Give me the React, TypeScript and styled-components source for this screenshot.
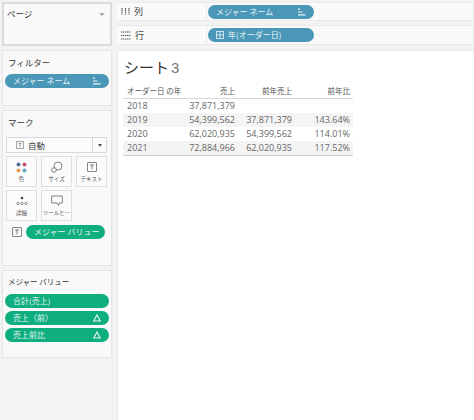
import React from "react";
import styled, { createGlobalStyle } from "styled-components";

const Global = createGlobalStyle`
  html, body { margin: 0; padding: 0; background: #f3f3f3; }
  body { font-family: "Noto Sans CJK JP", "Liberation Sans", sans-serif; }
  #root { width: 474px; height: 420px; overflow: hidden; }
`;

const Page = styled.div`
  width: 474px; height: 420px; display: grid;
  grid-template-columns: 112px 1fr; column-gap: 5px;
  padding-top: 2px; box-sizing: border-box; background: #f3f3f3; overflow: hidden;
`;
const Side = styled.aside`
  display: flex; flex-direction: column; gap: 4px; padding-left: 2px;
`;
const Card = styled.section<{ $h: number; $strong?: boolean }>`
  height: ${p => p.$h}px; box-sizing: border-box; background: #f9f9f9;
  border: ${p => (p.$strong ? "2px solid #dcdcdc" : "1px solid #e4e4e4")};
  position: relative;
`;
const CardTitle = styled.div<{ $small?: boolean; $tight?: boolean }>`
  font-size: ${p => (p.$small ? 7.5 : 8.5)}px; line-height: 12px; color: #333;
  padding: ${p => (p.$tight ? "3px 0 0 3px" : "5px 0 0 5px")};
`;
const Caret = styled.span`
  position: absolute; right: 5px; top: 9px; width: 0; height: 0;
  border-left: 3px solid transparent; border-right: 3px solid transparent;
  border-top: 3px solid #aaa;
`;
const Pill = styled.div<{ $green?: boolean; $w?: number }>`
  height: 14px; border-radius: 7px; box-sizing: border-box;
  width: ${p => (p.$w ? `${p.$w}px` : "auto")};
  background: ${p => (p.$green ? "#0fae7e" : "#4a97b7")};
  color: #e9f5f7; font-size: 8px; line-height: 14px; white-space: nowrap;
  display: flex; align-items: center; justify-content: space-between;
  padding: 0 8px;
`;
const PillStack = styled.div`
  display: flex; flex-direction: column; gap: 3px; padding: 6px 2px 0 2px;
`;
const FilterPill = styled.div`
  padding: 6px 2px 0 2px;
`;
const DropDown = styled.div`
  margin: 9px 4px 0 3px; height: 14px; border: 1px solid #d8d8d8; background: #fbfbfb;
  display: flex; align-items: center; font-size: 8.5px; color: #444; position: relative;
`;
const DropLabel = styled.div`
  flex: 1; display: flex; align-items: center; gap: 4px; padding-left: 9px;
`;
const DropArrow = styled.div`
  width: 13px; height: 100%; border-left: 1px solid #d8d8d8;
  display: flex; align-items: center; justify-content: center;
  &::after { content: ""; border-left: 2.5px solid transparent; border-right: 2.5px solid transparent; border-top: 3px solid #555; }
`;
const MarkGrid = styled.div`
  display: grid; grid-template-columns: repeat(3, 31px); grid-auto-rows: 31px;
  column-gap: 4px; row-gap: 3px; margin: 3px 0 0 3px;
`;
const MarkTile = styled.div`
  border: 1px solid #dfdfdf; background: #fbfbfb; display: flex; flex-direction: column;
  align-items: center; justify-content: flex-end; padding-bottom: 2px; box-sizing: border-box;
  font-size: 5.5px; line-height: 9px; color: #555; white-space: nowrap; overflow: hidden;
`;
const TileIcon = styled.div`
  flex: 1; display: flex; align-items: center; justify-content: center; padding-top: 2px;
`;
const EncodingRow = styled.div`
  display: flex; align-items: center; gap: 4px; margin: 4px 0 0 9px;
`;
const Main = styled.main`
  display: flex; flex-direction: column; gap: 4px; min-width: 0;
`;
const Shelf = styled.div<{ $h: number }>`
  height: ${p => p.$h}px; background: #fafafa; box-sizing: border-box; margin-right: 2px;
  border-top: 1px solid #e9e9e9; border-bottom: 1px solid #e9e9e9;
  display: grid; grid-template-columns: 90px 1fr;
`;
const ShelfLabel = styled.div`
  border-right: 1px solid #eaeaea; display: flex; align-items: center; gap: 4px;
  padding-left: 4px; font-size: 9px; color: #444;
`;
const ShelfBody = styled.div`
  display: flex; align-items: center; padding-left: 1px;
`;
const Sheet = styled.div`
  flex: 1; background: #fff; padding: 5px 0 0 6px; border-top: 1px solid #e6e6e6;
  border-left: 1px solid #e6e6e6; margin-top: 1px;
`;
const SheetTitle = styled.h1`
  margin: 0; font-size: 15px; line-height: 22px; font-weight: 400; color: #333;
  span { color: #777; font-family: "Liberation Sans", sans-serif; margin-left: 2px; }
`;
const Table = styled.div`
  width: 230px; margin: 4px 0 0 -1px; font-family: "Noto Sans CJK JP", sans-serif;
  border-bottom: 1px solid #cfcfcf;
`;
const Row = styled.div<{ $head?: boolean; $shade?: boolean }>`
  display: grid; grid-template-columns: 52px 60px 57px 58px; padding-right: 3px;
  height: 14px; align-items: center; font-size: 9px; line-height: 14px;
  color: ${p => (p.$head ? "#555" : "#666")};
  font-family: ${p => (p.$head ? `"Noto Sans CJK JP", sans-serif` : `"Open Sans", "Liberation Sans", sans-serif`)};
  background: ${p => (p.$shade ? "#f4f4f4" : "transparent")};
  border-bottom: ${p => (p.$head ? "1px solid #d6d6d6" : "none")};
  ${p => (p.$head ? "height: 15px; font-size: 7.5px;" : "")}
`;
const Cell = styled.div<{ $left?: boolean }>`
  text-align: ${p => (p.$left ? "left" : "right")}; white-space: nowrap;
  ${p => (p.$left ? "padding-left: 4px;" : "")}
`;
const PillLead = styled.span`
  display: flex; align-items: center; gap: 4px;
`;

const SortIcon = () => (
  <svg width="9" height="8" viewBox="0 0 9 8" fill="none" stroke="#e9f5f7" strokeWidth="1.2">
    <path d="M1 1.2h2M1 4h4.5M1 6.8h7.5" />
  </svg>
);
const Delta = () => (
  <svg width="8" height="8" viewBox="0 0 8 8" fill="none" stroke="#e9f5f7" strokeWidth="1.1">
    <path d="M4 1 7.2 7H.8Z" />
  </svg>
);
const TBox = ({ size = 10 }: { size?: number }) => (
  <svg width={size} height={size} viewBox="0 0 10 10" fill="none" stroke="#666" strokeWidth="0.8">
    <rect x=".5" y=".5" width="9" height="9" rx=".5" />
    <path d="M3 3h4M5 3v4.2" />
  </svg>
);
const Dots = () => (
  <svg width="11" height="11" viewBox="0 0 11 11">
    <circle cx="2.5" cy="2.5" r="2" fill="#5b6b9a" />
    <circle cx="8.5" cy="2.5" r="2" fill="#c2556a" />
    <circle cx="2.5" cy="8.5" r="2" fill="#e89a5a" />
    <circle cx="8.5" cy="8.5" r="2" fill="#63a8c4" />
  </svg>
);
const Lasso = () => (
  <svg width="12" height="12" viewBox="0 0 12 12" fill="none" stroke="#666" strokeWidth=".8">
    <circle cx="7" cy="5" r="4" />
    <circle cx="3" cy="9" r="2.3" fill="#fbfbfb" />
  </svg>
);
const Detail = () => (
  <svg width="12" height="10" viewBox="0 0 12 10" fill="none" stroke="#666" strokeWidth=".7">
    <circle cx="6" cy="2" r="1.3" fill="#444" stroke="none" />
    <circle cx="2" cy="7.5" r="1.2" /><circle cx="6" cy="7.5" r="1.2" /><circle cx="10" cy="7.5" r="1.2" />
  </svg>
);
const Bubble = () => (
  <svg width="12" height="12" viewBox="0 0 12 12" fill="none" stroke="#666" strokeWidth=".8">
    <path d="M.7 1h10.6v7H8.5L7.5 10.5 6.5 8H.7Z" />
  </svg>
);
const Columns = () => (
  <svg width="9" height="9" viewBox="0 0 9 9" stroke="#555" strokeWidth="1.2">
    <path d="M1 1v7M4.5 1v7M8 1v7" strokeDasharray="1.2 .6" />
  </svg>
);
const Rows = () => (
  <svg width="10" height="9" viewBox="0 0 10 9" stroke="#555" strokeWidth="1.2">
    <path d="M0 1h10M0 4.5h10M0 8h10" strokeDasharray="1.4 .6" />
  </svg>
);
const Plus = () => (
  <svg width="8" height="8" viewBox="0 0 8 8" fill="none" stroke="#e9f5f7" strokeWidth=".8">
    <rect x=".5" y=".5" width="7" height="7" /><path d="M4 .5v7M.5 4h7" />
  </svg>
);

const rows = [
  ["2018", "37,871,379", "", ""],
  ["2019", "54,399,562", "37,871,379", "143.64%"],
  ["2020", "62,020,935", "54,399,562", "114.01%"],
  ["2021", "72,884,966", "62,020,935", "117.52%"],
];

export default function App() {
  return (
    <Page>
      <Global />
      <Side>
        <Card $h={44} $strong><CardTitle $tight>ページ</CardTitle><Caret /></Card>
        <Card $h={56}>
          <CardTitle>フィルター</CardTitle>
          <FilterPill><Pill>メジャー ネーム<SortIcon /></Pill></FilterPill>
        </Card>
        <Card $h={156}>
          <CardTitle>マーク</CardTitle>
          <DropDown><DropLabel><TBox size={8} />自動</DropLabel><DropArrow /></DropDown>
          <MarkGrid>
            <MarkTile><TileIcon><Dots /></TileIcon>色</MarkTile>
            <MarkTile><TileIcon><Lasso /></TileIcon>サイズ</MarkTile>
            <MarkTile><TileIcon><TBox /></TileIcon>テキスト</MarkTile>
            <MarkTile><TileIcon><Detail /></TileIcon>詳細</MarkTile>
            <MarkTile><TileIcon><Bubble /></TileIcon>ツールヒ…</MarkTile>
          </MarkGrid>
          <EncodingRow><TBox /><Pill $green $w={79}>メジャー バリュー</Pill></EncodingRow>
        </Card>
        <Card $h={88}>
          <CardTitle $small>メジャー バリュー</CardTitle>
          <PillStack>
            <Pill $green>合計(売上)</Pill>
            <Pill $green>売上（前）<Delta /></Pill>
            <Pill $green>売上前比<Delta /></Pill>
          </PillStack>
        </Card>
      </Side>
      <Main>
        <Shelf $h={19}>
          <ShelfLabel><Columns />列</ShelfLabel>
          <ShelfBody><Pill $w={106}>メジャー ネーム<SortIcon /></Pill></ShelfBody>
        </Shelf>
        <Shelf $h={20}>
          <ShelfLabel><Rows />行</ShelfLabel>
          <ShelfBody>
            <Pill $w={106}><PillLead><Plus />年(オーダー日)</PillLead></Pill>
          </ShelfBody>
        </Shelf>
        <Sheet>
          <SheetTitle>シート<span>3</span></SheetTitle>
          <Table>
            <Row $head><Cell $left>オーダー日 の年</Cell><Cell>売上</Cell><Cell>前年売上</Cell><Cell>前年比</Cell></Row>
            {rows.map((r, i) => (
              <Row key={r[0]} $shade={i % 2 === 1}>
                <Cell $left>{r[0]}</Cell><Cell>{r[1]}</Cell><Cell>{r[2]}</Cell><Cell>{r[3]}</Cell>
              </Row>
            ))}
          </Table>
        </Sheet>
      </Main>
    </Page>
  );
}
